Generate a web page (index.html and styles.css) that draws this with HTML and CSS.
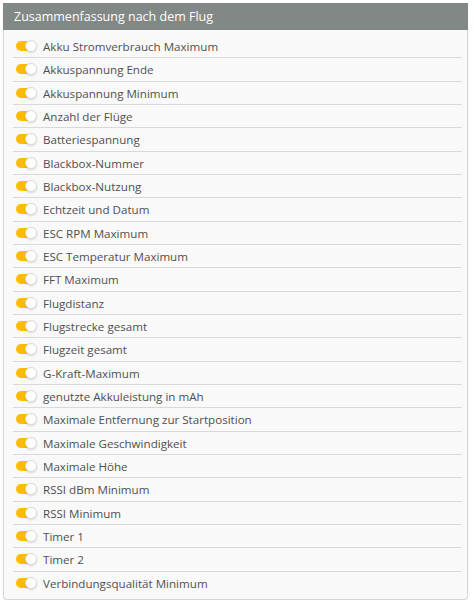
FILE: index.html
```html
<!DOCTYPE html>
<html lang="de">
<head>
<meta charset="utf-8">
<link rel="stylesheet" href="styles.css">
</head>
<body>
<div class="panel">
  <div class="titlebar">Zusammenfassung nach dem Flug</div>
  <ul class="list">
    <li class="row"><span class="toggle"></span><span class="label">Akku Stromverbrauch Maximum</span></li>
    <li class="row"><span class="toggle"></span><span class="label">Akkuspannung Ende</span></li>
    <li class="row"><span class="toggle"></span><span class="label">Akkuspannung Minimum</span></li>
    <li class="row"><span class="toggle"></span><span class="label">Anzahl der Flüge</span></li>
    <li class="row"><span class="toggle"></span><span class="label">Batteriespannung</span></li>
    <li class="row"><span class="toggle"></span><span class="label">Blackbox-Nummer</span></li>
    <li class="row"><span class="toggle"></span><span class="label">Blackbox-Nutzung</span></li>
    <li class="row"><span class="toggle"></span><span class="label">Echtzeit und Datum</span></li>
    <li class="row"><span class="toggle"></span><span class="label">ESC RPM Maximum</span></li>
    <li class="row"><span class="toggle"></span><span class="label">ESC Temperatur Maximum</span></li>
    <li class="row"><span class="toggle"></span><span class="label">FFT Maximum</span></li>
    <li class="row"><span class="toggle"></span><span class="label">Flugdistanz</span></li>
    <li class="row"><span class="toggle"></span><span class="label">Flugstrecke gesamt</span></li>
    <li class="row"><span class="toggle"></span><span class="label">Flugzeit gesamt</span></li>
    <li class="row"><span class="toggle"></span><span class="label">G-Kraft-Maximum</span></li>
    <li class="row"><span class="toggle"></span><span class="label">genutzte Akkuleistung in mAh</span></li>
    <li class="row"><span class="toggle"></span><span class="label">Maximale Entfernung zur Startposition</span></li>
    <li class="row"><span class="toggle"></span><span class="label">Maximale Geschwindigkeit</span></li>
    <li class="row"><span class="toggle"></span><span class="label">Maximale Höhe</span></li>
    <li class="row"><span class="toggle"></span><span class="label">RSSI dBm Minimum</span></li>
    <li class="row"><span class="toggle"></span><span class="label">RSSI Minimum</span></li>
    <li class="row"><span class="toggle"></span><span class="label">Timer 1</span></li>
    <li class="row"><span class="toggle"></span><span class="label">Timer 2</span></li>
    <li class="row"><span class="toggle"></span><span class="label">Verbindungsqualität Minimum</span></li>
  </ul>
</div>
</body>
</html>
```
FILE: styles.css
```css
html, body {
  margin: 0;
  padding: 0;
  background: #ffffff;
}
body {
  padding: 3px 0 0 3px;
  font-family: "Open Sans", "DejaVu Sans", sans-serif;
}
.panel {
  width: 465px;
  height: 597px;
  box-sizing: border-box;
  border: 1px solid #d6d6d6;
  border-radius: 0 0 4px 4px;
  background: #f9f9f9;
  box-shadow: 0 1px 2px rgba(0,0,0,0.08);
}
.titlebar {
  height: 27px;
  margin: -1px -1px 0 -1px;
  background: #828885;
  color: #ffffff;
  font-size: 12.5px;
  line-height: 27px;
  padding-left: 11px;
}
.list {
  list-style: none;
  margin: 0;
  padding: 5px 0 0 0;
}
.row {
  display: flex;
  align-items: center;
  height: 23.33px;
  box-sizing: border-box;
  margin: 0 5px 0 9px;
  border-bottom: 1px solid #d9d9d9;
  padding-left: 3px;
}
.row:last-child {
  border-bottom: none;
}
.toggle {
  position: relative;
  width: 20px;
  height: 10px;
  border-radius: 5px;
  background: #ffbb00;
  flex: none;
}
.toggle::after {
  content: "";
  position: absolute;
  right: -1px;
  top: -1px;
  width: 10px;
  height: 10px;
  border-radius: 50%;
  background: #ffffff;
  border: 1px solid #dcdcdc;
  box-shadow: 0 1px 2px rgba(0,0,0,0.15);
}
.label {
  margin-left: 7px;
  font-size: 11.6px;
  color: #505050;
  white-space: nowrap;
  padding-top: 1px;
}
```
